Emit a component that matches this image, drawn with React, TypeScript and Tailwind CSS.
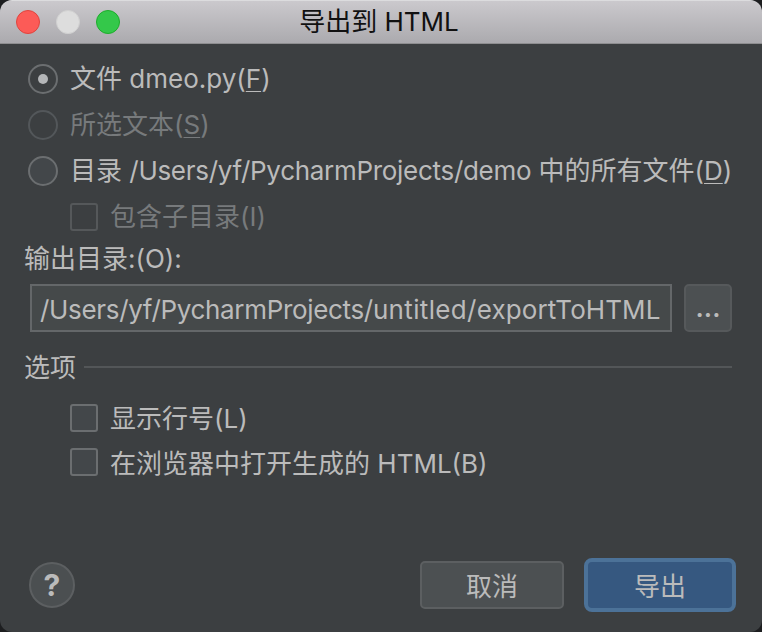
import React from 'react';

const FONT = "font-['Inter','Noto_Sans_CJK_SC',sans-serif]";

const Radio = ({ selected, disabled }: { selected?: boolean; disabled?: boolean }) => (
  <span
    className={`flex h-[30px] w-[30px] shrink-0 items-center justify-center rounded-full border-2 ${
      disabled ? 'border-[#53575a] bg-[#3c3f41]' : selected ? 'border-[#6b6e70] bg-[#3c3f41]' : 'border-[#6b6e70] bg-[#43474a]'
    }`}
  >
    {selected && <span className="h-[10px] w-[10px] rounded-full bg-[#b4b6b8]" />}
  </span>
);

const Check = ({ disabled }: { disabled?: boolean }) => (
  <span
    className={`h-[28px] w-[28px] shrink-0 rounded-[3px] border-2 ${
      disabled ? 'border-[#55585a] bg-[#3c3f41]' : 'border-[#6b6e70] bg-[#43474a]'
    }`}
  />
);

const U = ({ children }: { children: React.ReactNode }) => (
  <span className="underline decoration-1 underline-offset-[3px]">{children}</span>
);

export default function App() {
  return (
    <div className={`h-[632px] w-[762px] overflow-hidden bg-[#1d1e20] text-[26px] leading-[30px] text-[#bbbbbb] ${FONT}`}>
      <div className="flex h-full flex-col overflow-hidden rounded-[12px] bg-[#3c3f41]">
        {/* title bar */}
        <div className="relative flex h-[44px] shrink-0 items-center justify-center border-t border-b border-t-[#dcdcde] border-b-[#8e8e90] bg-gradient-to-b from-[#cbc9cd] to-[#abaaae]">
          <div className="absolute left-[16px] top-[9px] flex gap-[16px]">
            <span className="h-[24px] w-[24px] rounded-full border border-[#e0443e] bg-[#fc5b57]" />
            <span className="h-[24px] w-[24px] rounded-full border border-[#d0d0d0] bg-[#dddddd]" />
            <span className="h-[24px] w-[24px] rounded-full border border-[#1dad2b] bg-[#34c84a]" />
          </div>
          <span className="pr-[4px] text-[#111111]">导出到 HTML</span>
        </div>

        {/* body */}
        <div className="flex flex-1 flex-col pl-[24px] pr-[30px] pt-[12px]">
          <div className="flex h-[46px] items-center gap-[12px] pl-[4px]">
            <Radio selected />
            <span>文件 dmeo.py(<U>F</U>)</span>
          </div>
          <div className="flex h-[46px] items-center gap-[12px] pl-[4px] text-[#777a7c]">
            <Radio disabled />
            <span>所选文本(<U>S</U>)</span>
          </div>
          <div className="flex h-[46px] items-center gap-[12px] pl-[4px]">
            <Radio />
            <span className="whitespace-nowrap">
              目录 <span className="tracking-[-0.3px]">/Users/yf/PycharmProjects/demo</span> 中的所有文件(<U>D</U>)
            </span>
          </div>
          <div className="flex h-[46px] items-center gap-[12px] pl-[46px] text-[#777a7c]">
            <Check disabled />
            <span>包含子目录(I)</span>
          </div>

          <div className="mt-[4px] h-[30px]">输出目录:(O):</div>

          <div className="mt-[10px] flex items-center gap-[12px] pl-[6px]">
            <div className="flex h-[48px] w-[642px] items-center border-2 border-[#646769] bg-[#45494a] pl-[8px] pt-[3px] whitespace-nowrap">
              <span className="tracking-[-0.33px]">/Users/yf/PycharmProjects/</span>
              <span className="tracking-[0.35px]">untitled/</span>
              <span className="tracking-[0.07px]">exportToHTML</span>
            </div>
            <div className="flex h-[48px] w-[48px] items-center justify-center rounded-[5px] border-2 border-[#56595b] bg-[#4c5052] font-semibold">
              ...
            </div>
          </div>

          <div className="mt-[20px] flex h-[30px] items-center gap-[8px]">
            <span className="pt-[2px]">选项</span>
            <div className="h-[2px] flex-1 bg-[#535658]" />
          </div>

          <div className="mt-[13px] flex h-[46px] items-center gap-[12px] pl-[46px]">
            <Check />
            <span className="pt-[2px]">显示行号(L)</span>
          </div>
          <div className="flex h-[42px] items-center gap-[12px] pl-[46px]">
            <Check />
            <span className="pt-[3px]">在浏览器中打开生成的 HTML(B)</span>
          </div>

          {/* footer */}
          <div className="mt-auto mb-[20px] -mr-[4px] flex items-center justify-between pl-[5px]">
            <div className="flex h-[46px] w-[46px] items-center justify-center rounded-full border-2 border-[#5c5f61] bg-[#4b4f51] text-[30px] font-bold text-[#bbbbbb]">
              ?
            </div>
            <div className="flex items-center gap-[20px]">
              <div className="flex h-[48px] w-[144px] items-center justify-center rounded-[5px] border-2 border-[#5c5f61] bg-[#4c5052] pt-[3px]">
                取消
              </div>
              <div className="flex h-[54px] w-[152px] items-center justify-center rounded-[8px] border-[4px] border-[#4c7298] bg-[#365880] pt-[3px]">
                导出
              </div>
            </div>
          </div>
        </div>
      </div>
    </div>
  );
}
